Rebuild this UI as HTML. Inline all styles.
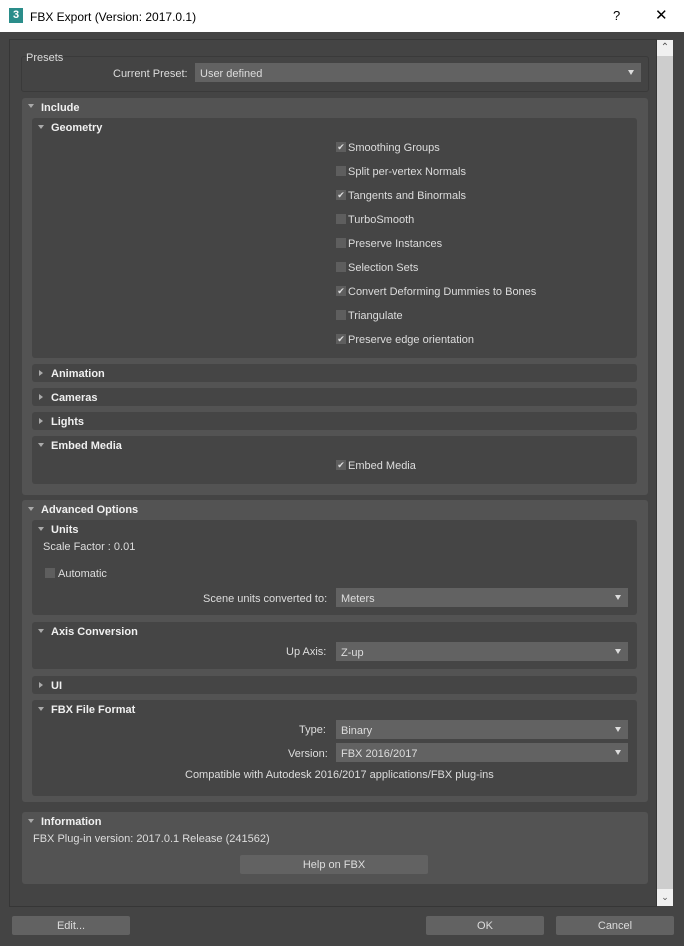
<!DOCTYPE html>
<html><head><style>
*{margin:0;padding:0;box-sizing:border-box}
body{width:684px;height:946px;background:#444;font-family:"Liberation Sans",sans-serif;font-size:11px;color:#ddd;position:relative;overflow:hidden}
.a{position:absolute}
.t{position:absolute;white-space:nowrap;line-height:12px;margin-top:1px}
.b{font-weight:bold;color:#f0f0f0}
.r{background:#535353;border-radius:3px;position:absolute}
.s{background:#454545;border-radius:3px;position:absolute}
.dd{position:absolute;background:#626262;height:19px;line-height:22px;padding-left:5px;color:#ddd}
.dd:after{content:"";position:absolute;right:7px;top:7px;border-left:3.5px solid transparent;border-right:3.5px solid transparent;border-top:5px solid #ddd}
.tri{position:absolute;width:0;height:0;border-left:3px solid transparent;border-right:3px solid transparent;border-top:4px solid #aaa}
.trr{position:absolute;width:0;height:0;border-top:3px solid transparent;border-bottom:3px solid transparent;border-left:4px solid #aaa}
.cb{position:absolute;width:10px;height:10px;background:#5e5e5e;color:#ddd;font-size:9px;line-height:10px;text-align:center}
.btn{position:absolute;background:#626262;border-radius:2px;text-align:center;height:19px;line-height:21px;color:#ddd}
</style></head><body>
<div class="a" style="left:0;top:0;width:684px;height:32px;background:#fff"></div>
<div class="a" style="left:9px;top:8px;width:14px;height:15px;background:#2a8d8a;color:#fff;font-weight:bold;font-size:11px;text-align:center;line-height:15px">3</div>
<div class="t" style="left:30px;top:10px;color:#000;font-size:12px;line-height:13px">FBX Export (Version: 2017.0.1)</div>
<div class="t" style="left:613px;top:9px;color:#000;font-size:13px">?</div>
<div class="t" style="left:655px;top:7px;color:#000;font-size:15px;line-height:16px;font-weight:normal">✕</div>

<div class="a" style="left:9px;top:39px;width:648px;height:868px;border:1px solid #363636;background:#444"></div>
<div class="a" style="left:657px;top:40px;width:16px;height:866px;background:#cdcdcd"></div>
<div class="a" style="left:657px;top:40px;width:16px;height:16px;background:#f0f0f0;color:#555;text-align:center;font-size:10px;line-height:16px">⌃</div>
<div class="a" style="left:657px;top:889px;width:16px;height:17px;background:#f0f0f0;color:#555;text-align:center;font-size:9px;line-height:17px">⌄</div>

<div class="a" style="left:21px;top:56px;width:628px;height:36px;border:1px solid #3a3a3a;border-radius:3px"></div>
<div class="t" style="left:26px;top:51px">Presets</div>
<div class="t" style="left:113px;top:67px">Current Preset:</div>
<div class="dd" style="left:195px;top:63px;width:446px">User defined</div>

<div class="r" style="left:22px;top:98px;width:626px;height:397px"></div>
<div class="tri" style="left:28px;top:104px"></div>
<div class="t b" style="left:41px;top:101px">Include</div>
<div class="s" style="left:32px;top:118px;width:605px;height:240px"></div>
<div class="tri" style="left:38px;top:125px"></div>
<div class="t b" style="left:51px;top:121px">Geometry</div>

<div class="cb" style="left:336px;top:142px">✔</div><div class="t" style="left:348px;top:141px">Smoothing Groups</div>
<div class="cb" style="left:336px;top:166px"></div><div class="t" style="left:348px;top:165px">Split per-vertex Normals</div>
<div class="cb" style="left:336px;top:190px">✔</div><div class="t" style="left:348px;top:189px">Tangents and Binormals</div>
<div class="cb" style="left:336px;top:214px"></div><div class="t" style="left:348px;top:213px">TurboSmooth</div>
<div class="cb" style="left:336px;top:238px"></div><div class="t" style="left:348px;top:237px">Preserve Instances</div>
<div class="cb" style="left:336px;top:262px"></div><div class="t" style="left:348px;top:261px">Selection Sets</div>
<div class="cb" style="left:336px;top:286px">✔</div><div class="t" style="left:348px;top:285px">Convert Deforming Dummies to Bones</div>
<div class="cb" style="left:336px;top:310px"></div><div class="t" style="left:348px;top:309px">Triangulate</div>
<div class="cb" style="left:336px;top:334px">✔</div><div class="t" style="left:348px;top:333px">Preserve edge orientation</div>

<div class="s" style="left:32px;top:364px;width:605px;height:18px"></div><div class="trr" style="left:39px;top:370px"></div><div class="t b" style="left:51px;top:367px">Animation</div>
<div class="s" style="left:32px;top:388px;width:605px;height:18px"></div><div class="trr" style="left:39px;top:394px"></div><div class="t b" style="left:51px;top:391px">Cameras</div>
<div class="s" style="left:32px;top:412px;width:605px;height:18px"></div><div class="trr" style="left:39px;top:418px"></div><div class="t b" style="left:51px;top:415px">Lights</div>
<div class="s" style="left:32px;top:436px;width:605px;height:48px"></div><div class="tri" style="left:38px;top:443px"></div><div class="t b" style="left:51px;top:439px">Embed Media</div>
<div class="cb" style="left:336px;top:460px">✔</div><div class="t" style="left:348px;top:459px">Embed Media</div>

<div class="r" style="left:22px;top:500px;width:626px;height:302px"></div>
<div class="tri" style="left:28px;top:507px"></div>
<div class="t b" style="left:41px;top:503px">Advanced Options</div>
<div class="s" style="left:32px;top:520px;width:605px;height:95px"></div>
<div class="tri" style="left:38px;top:527px"></div><div class="t b" style="left:51px;top:523px">Units</div>
<div class="t" style="left:43px;top:540px">Scale Factor : 0.01</div>
<div class="cb" style="left:45px;top:568px"></div><div class="t" style="left:58px;top:567px">Automatic</div>
<div class="t" style="left:203px;top:592px">Scene units converted to:</div>
<div class="dd" style="left:336px;top:588px;width:292px">Meters</div>

<div class="s" style="left:32px;top:622px;width:605px;height:47px"></div>
<div class="tri" style="left:38px;top:629px"></div><div class="t b" style="left:51px;top:625px">Axis Conversion</div>
<div class="t" style="left:286px;top:645px">Up Axis:</div>
<div class="dd" style="left:336px;top:642px;width:292px">Z-up</div>

<div class="s" style="left:32px;top:676px;width:605px;height:18px"></div><div class="trr" style="left:39px;top:682px"></div><div class="t b" style="left:51px;top:679px">UI</div>

<div class="s" style="left:32px;top:700px;width:605px;height:96px"></div>
<div class="tri" style="left:38px;top:707px"></div><div class="t b" style="left:51px;top:703px">FBX File Format</div>
<div class="t" style="left:299px;top:723px">Type:</div>
<div class="dd" style="left:336px;top:720px;width:292px">Binary</div>
<div class="t" style="left:288px;top:747px">Version:</div>
<div class="dd" style="left:336px;top:743px;width:292px">FBX 2016/2017</div>
<div class="t" style="left:185px;top:768px">Compatible with Autodesk 2016/2017 applications/FBX plug-ins</div>

<div class="r" style="left:22px;top:812px;width:626px;height:72px"></div>
<div class="tri" style="left:28px;top:819px"></div>
<div class="t b" style="left:41px;top:815px">Information</div>
<div class="t" style="left:33px;top:832px">FBX Plug-in version: 2017.0.1 Release (241562)</div>
<div class="btn" style="left:240px;top:855px;width:188px">Help on FBX</div>

<div class="btn" style="left:12px;top:916px;width:118px">Edit...</div>
<div class="btn" style="left:426px;top:916px;width:118px">OK</div>
<div class="btn" style="left:556px;top:916px;width:118px">Cancel</div>
</body></html>
